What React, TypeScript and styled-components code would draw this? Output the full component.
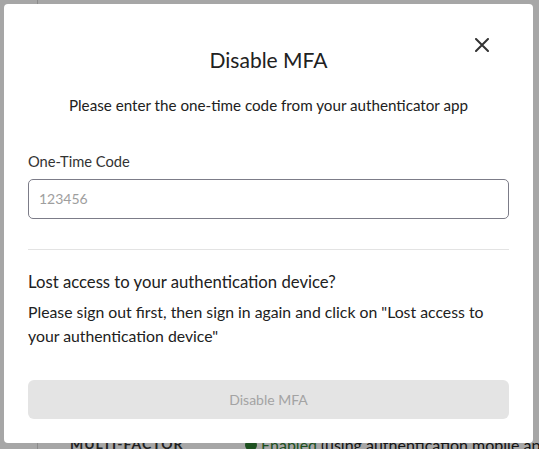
import * as React from "react";
import styled, { createGlobalStyle } from "styled-components";

const GlobalStyle = createGlobalStyle`
  html, body {
    margin: 0;
    padding: 0;
    width: 539px;
    height: 449px;
    overflow: hidden;
    font-family: "Lato", "Noto Sans", sans-serif;
    color: #212121;
    background: #ffffff;
  }
  * { box-sizing: border-box; }
`;

const Page = styled.div`
  width: 539px;
  height: 449px;
  display: flex;
  position: relative;
  overflow: hidden;
`;

const SideBar = styled.div`
  width: 38px;
  flex-shrink: 0;
  border-right: 1px solid #d6d6d6;
`;

const PageContent = styled.div`
  flex: 1;
  display: flex;
  flex-direction: column;
  justify-content: flex-end;
  padding: 0 0 0 32px;
`;

const PageRow = styled.div`
  display: flex;
  align-items: flex-start;
  height: 10px;
  overflow: visible;
  font-size: 16px;
  white-space: nowrap;
`;

const SectionLabel = styled.div`
  width: 175px;
  margin-top: -4px;
  font-size: 14px;
  letter-spacing: 1px;
  color: #333;
  font-weight: 700;
`;

const Status = styled.div`
  display: flex;
  align-items: center;
  gap: 4px;
  margin-top: -4px;
`;

const Dot = styled.span`
  width: 12px;
  height: 12px;
  border-radius: 50%;
  background: #2e7d32;
`;

const Enabled = styled.span`
  color: #2e7d32;
`;

const Backdrop = styled.div`
  position: absolute;
  inset: 0;
  background: rgba(0, 0, 0, 0.35);
  padding: 4px 0 0 4px;
`;

const Modal = styled.div`
  width: 529px;
  height: 439px;
  background: #ffffff;
  border-radius: 4px;
  padding: 24px;
  display: flex;
  flex-direction: column;
  position: relative;
`;

const Title = styled.h2`
  margin: 17px 0 0;
  text-align: center;
  font-size: 21px;
  font-weight: 400;
  line-height: 30px;
  color: #212121;
`;

const CloseButton = styled.button`
  position: absolute;
  top: 32px;
  right: 42px;
  width: 18px;
  height: 18px;
  padding: 0;
  border: none;
  background: transparent;
  display: flex;
  align-items: center;
  justify-content: center;
  cursor: pointer;
`;

const Subtitle = styled.p`
  margin: 20px 0 0;
  text-align: center;
  font-size: 15.2px;
  line-height: 20px;
  color: #212121;
`;

const Label = styled.label`
  margin-top: 36px;
  font-size: 14.7px;
  line-height: 20px;
  color: #333;
`;

const Input = styled.input`
  margin-top: 8px;
  height: 40px;
  width: 100%;
  border: 1px solid #7c7c88;
  border-radius: 5px;
  padding: 0 10px;
  font-family: inherit;
  font-size: 14px;
  color: #212121;
  outline: none;
  &::placeholder {
    color: #9e9e9e;
  }
`;

const Divider = styled.hr`
  margin: 30px 0 0;
  border: none;
  border-top: 1px solid #e3e3e3;
`;

const Heading = styled.h3`
  margin: 20px 0 0;
  font-size: 16.7px;
  font-weight: 400;
  line-height: 24px;
  color: #212121;
`;

const Paragraph = styled.p`
  margin: 6px 0 0;
  font-size: 15.8px;
  line-height: 24px;
  color: #212121;
`;

const SubmitButton = styled.button`
  margin-top: 32px;
  height: 40px;
  width: 100%;
  border: none;
  border-radius: 6px;
  background: #e4e4e4;
  color: #a3a3a3;
  font-family: inherit;
  font-size: 14px;
`;

function CloseIcon() {
  return (
    <svg width="14" height="14" viewBox="0 0 14 14">
      <path d="M1 1 L13 13 M13 1 L1 13" stroke="#333" strokeWidth="2" strokeLinecap="round" />
    </svg>
  );
}

export default function App() {
  return (
    <>
      <GlobalStyle />
      <Page>
        <SideBar />
        <PageContent>
          <PageRow>
            <SectionLabel>MULTI-FACTOR</SectionLabel>
            <Status>
              <Dot />
              <Enabled>Enabled</Enabled>
              <span>(using authentication mobile app)</span>
            </Status>
          </PageRow>
        </PageContent>
        <Backdrop>
          <Modal>
            <CloseButton aria-label="Close">
              <CloseIcon />
            </CloseButton>
            <Title>Disable MFA</Title>
            <Subtitle>Please enter the one-time code from your authenticator app</Subtitle>
            <Label>One-Time Code</Label>
            <Input placeholder="123456" />
            <Divider />
            <Heading>Lost access to your authentication device?</Heading>
            <Paragraph>
              Please sign out first, then sign in again and click on "Lost access to your
              authentication device"
            </Paragraph>
            <SubmitButton disabled>Disable MFA</SubmitButton>
          </Modal>
        </Backdrop>
      </Page>
    </>
  );
}
